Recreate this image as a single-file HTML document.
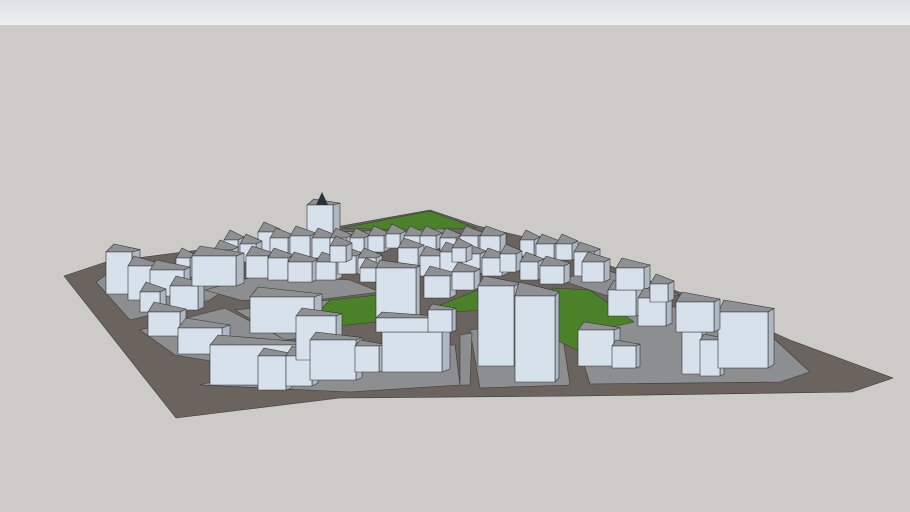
<!DOCTYPE html>
<html><head><meta charset="utf-8"><style>
html,body{margin:0;padding:0;width:910px;height:512px;overflow:hidden;background:#cccbc8}
.top{position:absolute;left:0;top:0;width:910px;height:25px;background:linear-gradient(#dde1e1,#eff1f1)}
svg{position:absolute;left:0;top:0}
</style></head><body>
<div class="top"></div>
<svg id="s" width="910" height="512" viewBox="0 0 910 512">
<g stroke="#3a3a3a" stroke-width="0.6" stroke-linejoin="round">
<polygon fill="#6b635e" points="64,276 106,262 230,246 330,228 430,210 478,226 520,236 600,262 700,300 790,340 893,378 852,392 580,396 340,398 176,418"/>
<polygon fill="#8d8e90" points="96,282 110,272 210,262 240,280 210,300 130,320"/>
<polygon fill="#8d8e90" points="140,330 225,308 290,342 235,365 175,355"/>
<polygon fill="#8d8e90" points="200,385 300,358 380,345 455,345 460,385 350,392"/>
<polygon fill="#8d8e90" points="205,290 260,275 350,280 380,292 300,302 240,300"/>
<polygon fill="#8d8e90" points="235,310 330,300 330,335 285,340"/>
<polygon fill="#8d8e90" points="470,330 560,318 570,385 480,388"/>
<polygon fill="#8d8e90" points="570,320 650,300 720,320 770,335 810,372 780,382 590,384"/>
<polygon fill="#8d8e90" points="560,280 600,268 680,295 620,300"/>
<polygon fill="#8d8e90" points="240,268 300,258 350,262 330,280"/>
<polygon fill="#8d8e90" points="340,232 440,228 480,240 400,245"/>
<polygon fill="#8d8e90" points="460,335 472,333 470,385 460,385"/>
<polygon fill="#4b8229" points="342,228 430,211 476,228 400,230"/>
<polygon fill="#4b8229" points="300,330 330,300 378,295 376,322"/>
<polygon fill="#4b8229" points="440,305 478,290 480,310 455,312"/>
<polygon fill="#4b8229" points="552,288 590,290 634,322 600,330 577,350 556,340"/>
</g>
<g id="b" stroke="#333" stroke-width="0.6" stroke-linejoin="round"></g>
<polygon points="316,205 322,192 328,205" fill="#2d3236"/>
</svg>
<script>
var g=document.getElementById('b'),h='';
function box(x,y,w,ht,d,sw){d=d||10;sw=sw||6;
h+='<polygon fill="#aeb8c2" points="'+(x+w)+','+y+' '+(x+w+sw)+','+(y-d*0.3)+' '+(x+w+sw)+','+(y+ht-d*0.3)+' '+(x+w)+','+(y+ht)+'"/>';
h+='<polygon fill="#8f9092" points="'+x+','+y+' '+(x+w)+','+y+' '+(x+w+sw)+','+(y-d*0.3)+' '+(x+sw)+','+(y-d)+'"/>';
h+='<rect fill="#d7e1ec" x="'+x+'" y="'+y+'" width="'+w+'" height="'+ht+'"/>';}
var B=[
[307,205,26,30,6,7],
[258,232,16,20],[270,238,18,22],[290,236,20,24],[312,238,18,20],[330,238,16,18],[224,240,14,16],[240,244,16,18],
[350,238,14,14],[368,236,16,16],[386,234,14,14],[404,236,16,16],[420,236,16,14],[440,238,16,16],[460,236,18,16],[480,236,20,18],
[520,240,14,16],[536,244,18,16],[556,244,16,16],[574,252,20,24],
[214,250,18,18],[246,256,22,22],[268,258,20,22],[288,262,24,20],[316,262,20,18],
[338,256,18,18],[358,258,18,16],[398,248,20,18],[420,256,20,20],[440,252,20,22],[462,254,18,20],[482,258,20,18],[500,254,16,18],[520,262,18,18],[540,266,24,18],
[176,258,14,20],[330,246,16,16],[452,248,14,14],[424,276,26,22],[452,272,22,18],[360,268,16,14],
[106,252,26,42,8,8],[128,266,24,34],[150,270,34,26],[170,286,28,24],[192,256,44,30,10,8],[140,292,20,20],[148,312,32,24],
[178,328,44,26,10,8],[210,345,86,40,10,8],[258,356,28,34,8,6],[286,356,26,30],
[250,297,64,36,10,8],[296,316,40,44,8,6],[310,340,46,40,8,6],[355,346,24,26,6,5],[382,332,60,40,10,8],
[376,268,40,54,8,4],[376,318,56,14,6,6],[428,310,24,22,6,4],
[478,286,36,80,10,6],[515,296,40,86,14,4],
[578,330,36,36,8,6],[612,346,24,22,6,4],
[582,262,22,20],[608,290,28,26],[616,268,28,22],[638,298,28,28],[650,284,18,18],
[682,332,20,42,6,4],[700,340,20,36,6,4],[718,312,50,56,12,6],[676,302,38,30]
];
B.forEach(function(b){box.apply(null,b)});
g.innerHTML=h;
</script>
</body></html>
